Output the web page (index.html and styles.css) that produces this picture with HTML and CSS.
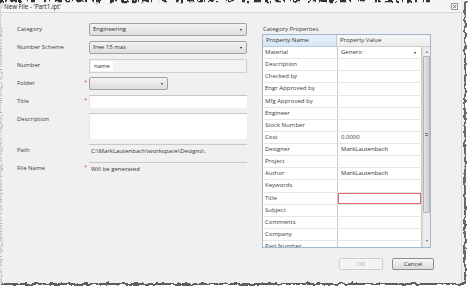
FILE: index.html
```html
<!DOCTYPE html>
<html>
<head>
<meta charset="utf-8">
<link rel="stylesheet" href="styles.css">
</head>
<body>
<div class="shot">
  <div class="dialog">
    <div class="titlebar">
      <span class="title">New File - 'Part1.ipt'</span>
      <span class="close"><svg width="7" height="7" viewBox="0 0 7 7"><rect x="0.5" y="0.5" width="6" height="6" fill="#f4f4f4" stroke="#9a9a9a"/><path d="M2 2L5 5M5 2L2 5" stroke="#555" stroke-width="0.8"/></svg></span>
    </div>
    <div class="client">
      <div class="form">
        <span class="lbl">Category</span><span class="star"></span>
        <div class="combo"><span>Engineering</span><i class="arrow"></i></div>

        <span class="lbl">Number Scheme</span><span class="star"></span>
        <div class="combo"><span>free 15 max</span><i class="arrow"></i></div>

        <span class="lbl">Number</span><span class="star"></span>
        <div class="numfield"><span class="token">name</span></div>

        <span class="lbl">Folder</span><span class="star">*</span>
        <div class="combo short"><span></span><i class="arrow"></i></div>

        <span class="lbl">Title</span><span class="star">*</span>
        <div class="textbox"></div>

        <span class="lbl top">Description</span><span class="star"></span>
        <div class="textbox"></div>

        <span class="lbl">Path</span><span class="star"></span>
        <div class="readonly">C:\MarkLautenbach\workspace\Designs\.</div>

        <span class="lbl">File Name</span><span class="star">*</span>
        <div class="readonly">Will be generated</div>
      </div>

      <div class="props">
        <div class="caption">Category Properties</div>
        <div class="grid">
          <div class="ghead">
            <div class="hname">Property Name</div>
            <div class="hval">Property Value</div>
          </div>
          <div class="gbody">
            <div class="rows">
              <div class="row"><div class="pn">Material</div><div class="pv combo-cell">Generic<i class="arrow"></i></div></div>
              <div class="row"><div class="pn">Description</div><div class="pv"></div></div>
              <div class="row"><div class="pn">Checked by</div><div class="pv"></div></div>
              <div class="row"><div class="pn">Engr Approved by</div><div class="pv"></div></div>
              <div class="row"><div class="pn">Mfg Approved by</div><div class="pv"></div></div>
              <div class="row"><div class="pn">Engineer</div><div class="pv"></div></div>
              <div class="row"><div class="pn">Stock Number</div><div class="pv"></div></div>
              <div class="row"><div class="pn">Cost</div><div class="pv">0.0000</div></div>
              <div class="row"><div class="pn">Designer</div><div class="pv">MarkLautenbach</div></div>
              <div class="row"><div class="pn">Project</div><div class="pv"></div></div>
              <div class="row"><div class="pn">Author</div><div class="pv">MarkLautenbach</div></div>
              <div class="row"><div class="pn">Keywords</div><div class="pv"></div></div>
              <div class="row"><div class="pn">Title</div><div class="pv invalid"></div></div>
              <div class="row"><div class="pn">Subject</div><div class="pv"></div></div>
              <div class="row"><div class="pn">Comments</div><div class="pv"></div></div>
              <div class="row"><div class="pn">Company</div><div class="pv"></div></div>
              <div class="row last"><div class="pn">Part Number</div><div class="pv"></div></div>
            </div>
            <div class="vscroll">
              <div class="sarrow up"></div>
              <div class="thumb"><span class="grip"></span></div>
              <div class="sarrow down"></div>
            </div>
          </div>
        </div>
        <div class="buttons">
          <button class="btn ok" disabled>OK</button>
          <button class="btn cancel">Cancel</button>
        </div>
      </div>
    </div>
  </div>
  <svg class="edges" width="474" height="293" viewBox="0 0 474 293">
    <defs>
      <filter id="torn" x="-5%" y="-5%" width="110%" height="110%">
        <feTurbulence type="fractalNoise" baseFrequency="0.18" numOctaves="2" seed="7" result="n"/>
        <feDisplacementMap in="SourceGraphic" in2="n" scale="4.5" xChannelSelector="R" yChannelSelector="G"/>
      </filter>
      <filter id="blur"><feGaussianBlur stdDeviation="0.9"/></filter>
    </defs>
    <g filter="url(#blur)" opacity="0.7">
      <path d="M467 6 L467 287 L2 287" fill="none" stroke="#777" stroke-width="2.4"/>
    </g>
    <g filter="url(#torn)">
      <path d="M465 0 L474 0 L474 293 L0 293 L0 284 L465 284 Z" fill="#fff"/>
      <path d="M465 2 L465 284 L1 284" fill="none" stroke="#2e2e2e" stroke-width="1.4"/>
      <path d="M1 2 L1 284" fill="none" stroke="#8a8a8a" stroke-width="1.2" stroke-dasharray="1 1.2"/>
      <path d="M0 1.2 L440 1.2" fill="none" stroke="#333" stroke-width="2.2" stroke-dasharray="4 2 1 3 7 2 2 6 1 2 5 9 3 2 2 4 8 3"/>
    </g>
  </svg>
</div>
</body>
</html>
```

FILE: styles.css
```css
* { box-sizing: border-box; }
html, body { margin: 0; padding: 0; background: #fff; }
body {
  font-family: "Open Sans", "Noto Sans", sans-serif;
  font-size: 6px;
  color: #333;
}
.shot {
  position: relative;
  width: 474px;
  height: 293px;
  overflow: hidden;
  background: #fff;
}
.dialog {
  width: 466px;
  height: 285px;
  background: #f0f0f0;
}
.titlebar {
  height: 13px;
  display: flex;
  align-items: center;
  justify-content: space-between;
  padding: 1px 4px 0 4px;
  background: #f5f5f5;
  border-bottom: 1px solid #d6d6d6;
  margin-right: 4px;
}
.title { color: #222; font-size: 6.2px; }
.close { display: flex; margin-top: 0; }
.close svg { display: block; }

.client {
  display: flex;
  padding: 10px 0 0 17px;
  margin-right: 4px;
  height: 272px;
  border-right: 1px solid #d9d9d9;
}

/* left form */
.form {
  width: 230px;
  display: grid;
  grid-template-columns: 67px 5px 158px;
  grid-template-rows: 13px 13px 13px 13px 13px 26px 13px 13px;
  row-gap: 5px;
  align-content: start;
}
.lbl { line-height: 13px; color: #3c3c3c; white-space: nowrap; }
.lbl.top { align-self: start; }
.star { color: #e05050; line-height: 11px; font-size: 6px; }

.combo {
  position: relative;
  height: 13px;
  border: 1px solid #a2a2a2;
  border-radius: 2px;
  background: linear-gradient(#f3f3f3, #dedede);
  line-height: 11px;
  padding-left: 3px;
  color: #333;
}
.combo.short { width: 79px; }
.arrow {
  position: absolute;
  right: 4px;
  top: 5px;
  width: 0; height: 0;
  border-left: 1.5px solid transparent;
  border-right: 1.5px solid transparent;
  border-top: 2px solid #222;
}
.numfield {
  height: 14px;
  border: 1px solid #cfcfcf;
  background: #f3f3f3;
  padding: 1px;
  display: flex;
}
.token {
  background: #fff;
  width: 22px;
  line-height: 10px;
  padding-left: 3px;
  color: #333;
}
.textbox {
  background: #fff;
  border-top: 1px solid #c6c6c6;
  border-left: 1px solid #e4e4e4;
}
.readonly {
  border-top: 1px solid #c8c8c8;
  line-height: 12px;
  padding-left: 2px;
  color: #333;
  white-space: nowrap;
}

/* right panel */
.props {
  margin-left: 15px;
  margin-top: 2px;
  width: 172px;
  display: flex;
  flex-direction: column;
}
.caption {
  height: 9px;
  line-height: 9px;
  padding-left: 1px;
  color: #3c3c3c;
}
.grid {
  width: 169px;
  height: 214px;
  border: 1px solid #9fb6cc;
  background: #fff;
  display: flex;
  flex-direction: column;
}
.ghead {
  display: flex;
  height: 12px;
  flex: none;
}
.hname {
  width: 74px;
  background: linear-gradient(#e6f0fa, #d7e6f5);
  border-right: 1px solid #b9cde0;
  border-bottom: 1px solid #b9cde0;
  line-height: 11px;
  padding-left: 3px;
  color: #333;
}
.hval {
  flex: 1;
  background: linear-gradient(#f7f7f7, #ececec);
  border-bottom: 1px solid #cfcfcf;
  line-height: 11px;
  padding-left: 3px;
  color: #333;
}
.gbody {
  flex: 1;
  display: flex;
  overflow: hidden;
}
.rows {
  width: 159px;
  display: grid;
  grid-auto-rows: 12.13px;
  align-content: start;
}
.row {
  display: grid;
  grid-template-columns: 74px 85px;
  border-bottom: 1px solid #e6e6e6;
}
.pn {
  line-height: 11px;
  padding-left: 2px;
  color: #3c3c3c;
  white-space: nowrap;
  overflow: hidden;
}
.pv {
  position: relative;
  background: #fff;
  border-left: 1px solid #c9c9c9;
  border-right: 1px solid #c9c9c9;
  line-height: 11px;
  padding-left: 3px;
  color: #333;
}
.pv.invalid { box-shadow: inset 0 0 0 1px #de6a6a; }
.pv.combo-cell .arrow { right: 5px; top: 5px; }
.vscroll {
  width: 8px;
  background: #ececec;
  border-left: 1px solid #dadada;
  display: flex;
  flex-direction: column;
  align-items: center;
}
.sarrow {
  width: 0; height: 0;
  border-left: 1.5px solid transparent;
  border-right: 1.5px solid transparent;
  flex: none;
}
.sarrow.up { border-bottom: 2px solid #666; margin-top: 4px; }
.sarrow.down { border-top: 2px solid #666; margin-top: auto; margin-bottom: 5px; }
.thumb {
  width: 7px;
  height: 157px;
  margin-top: 3px;
  background: linear-gradient(90deg, #e2e2e2, #cfcfcf);
  border: 1px solid #b4b4b4;
  border-radius: 1px;
  display: flex;
  align-items: center;
  justify-content: center;
}
.grip {
  width: 3px;
  height: 3px;
  border-top: 1px solid #777;
  border-bottom: 1px solid #777;
}

.buttons {
  display: flex;
  gap: 9px;
  margin-top: 10px;
  padding-left: 77px;
}
.btn {
  height: 12px;
  font-family: inherit;
  font-size: 6px;
  padding: 0;
  border-radius: 2px;
  line-height: 10px;
}
.btn.ok {
  width: 44px;
  background: #f4f4f4;
  border: 1px solid #cdcdcd;
  color: #b0b0b0;
}
.btn.cancel {
  width: 42px;
  background: linear-gradient(#f6f6f6, #dcdcdc);
  border: 1px solid #8e8e8e;
  color: #333;
}

.edges {
  position: absolute;
  left: 0;
  top: 0;
  pointer-events: none;
}
```
